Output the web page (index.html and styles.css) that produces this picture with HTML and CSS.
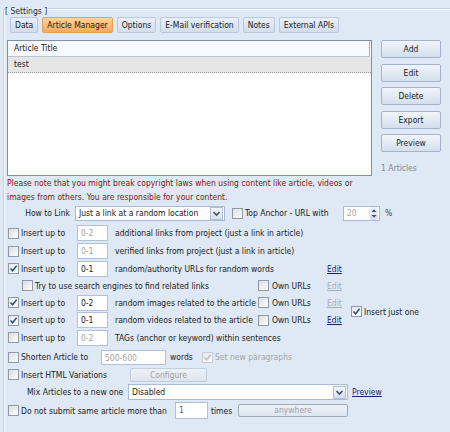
FILE: index.html
```html
<!DOCTYPE html>
<html>
<head>
<meta charset="utf-8">
<link rel="stylesheet" href="styles.css">
</head>
<body>
<fieldset class="group">
  <legend class="legend">[ Settings ]</legend>
  <div class="tabs">
    <span class="tab">Data</span>
    <span class="tab active">Article Manager</span>
    <span class="tab">Options</span>
    <span class="tab">E-Mail verification</span>
    <span class="tab">Notes</span>
    <span class="tab">External APIs</span>
  </div>
  <div class="top">
    <div class="list">
      <div class="list-head">Article Title</div>
      <div class="list-row">test</div>
    </div>
    <div class="btns">
      <span class="btn">Add</span>
      <span class="btn">Edit</span>
      <span class="btn">Delete</span>
      <span class="btn">Export</span>
      <span class="btn">Preview</span>
      <span class="count">1 Articles</span>
    </div>
  </div>
  <p class="warn">Please note that you might break copyright laws when using content like article, videos or<br>images from others. You are responsible for your content.</p>

  <div class="row how">
    <span class="how-lbl">How to Link</span>
    <span class="select sel-how"><span class="sel-text">Just a link at a random location</span><span class="arrow"><svg width="11" height="11" viewBox="0 0 11 11"><path d="M2.5 4 L5.5 7 L8.5 4" fill="none" stroke="#3d4f6e" stroke-width="1.6"/></svg></span></span>
    <span class="cbl anchor"><span class="cb"></span>Top Anchor - URL with</span>
    <span class="spin"><span class="spin-text">20</span><span class="spin-btn"><svg width="8" height="13" viewBox="0 0 8 13"><path d="M1.5 5 L4 2.2 L6.5 5 Z M1.5 8 L4 10.8 L6.5 8 Z" fill="#3d4f6e"/></svg></span></span>
    <span class="pct">%</span>
  </div>

  <div class="opts">
    <span class="cbl first"><span class="cb"></span>Insert up to</span>
    <span class="inp dis">0-2</span>
    <span class="desc wide">additional links from project (just a link in article)</span>

    <span class="cbl first"><span class="cb"></span>Insert up to</span>
    <span class="inp dis">0-1</span>
    <span class="desc wide">verified links from project (just a link in article)</span>

    <span class="cbl first"><span class="cb on"><svg width="9" height="9" viewBox="0 0 9 9"><path d="M1.5 4.5 L3.6 6.8 L7.6 1.8" fill="none" stroke="#2f4f86" stroke-width="1.5"/></svg></span>Insert up to</span>
    <span class="inp">0-1</span>
    <span class="desc mid">random/authority URLs for random words</span>
    <span class="edit"><span class="link">Edit</span></span>

    <span class="cbl try"><span class="cb"></span>Try to use search engines to find related links</span>
    <span class="own"><span class="cb"></span>Own URLs</span>
    <span class="edit"><span class="link dis">Edit</span></span>

    <span class="cbl first"><span class="cb on"><svg width="9" height="9" viewBox="0 0 9 9"><path d="M1.5 4.5 L3.6 6.8 L7.6 1.8" fill="none" stroke="#2f4f86" stroke-width="1.5"/></svg></span>Insert up to</span>
    <span class="inp">0-2</span>
    <span class="desc">random images related to the article</span>
    <span class="own"><span class="cb"></span>Own URLs</span>
    <span class="edit"><span class="link dis">Edit</span></span>
    <span class="cbl justone"><span class="cb on"><svg width="9" height="9" viewBox="0 0 9 9"><path d="M1.5 4.5 L3.6 6.8 L7.6 1.8" fill="none" stroke="#2f4f86" stroke-width="1.5"/></svg></span>Insert just one</span>

    <span class="cbl first"><span class="cb on"><svg width="9" height="9" viewBox="0 0 9 9"><path d="M1.5 4.5 L3.6 6.8 L7.6 1.8" fill="none" stroke="#2f4f86" stroke-width="1.5"/></svg></span>Insert up to</span>
    <span class="inp">0-1</span>
    <span class="desc">random videos related to the article</span>
    <span class="own"><span class="cb"></span>Own URLs</span>
    <span class="edit"><span class="link">Edit</span></span>

    <span class="cbl first"><span class="cb"></span>Insert up to</span>
    <span class="inp dis">0-2</span>
    <span class="desc wide">TAGs (anchor or keyword) within sentences</span>
  </div>

  <div class="row shorten">
    <span class="cbl sh-lbl"><span class="cb"></span>Shorten Article to</span>
    <span class="inp dis sh-inp">500-600</span>
    <span class="words">words</span>
    <span class="cbl disabled"><span class="cb on dcb"><svg width="9" height="9" viewBox="0 0 9 9"><path d="M1.5 4.5 L3.6 6.8 L7.6 1.8" fill="none" stroke="#b9bfc6" stroke-width="1.5"/></svg></span>Set new paragraphs</span>
  </div>

  <div class="row html">
    <span class="cbl html-lbl"><span class="cb"></span>Insert HTML Variations</span>
    <span class="btn dbtn cfg">Configure</span>
  </div>

  <div class="row mix">
    <span class="mix-lbl">Mix Articles to a new one</span>
    <span class="select sel-mix"><span class="sel-text">Disabled</span><span class="arrow"><svg width="11" height="11" viewBox="0 0 11 11"><path d="M2.5 4 L5.5 7 L8.5 4" fill="none" stroke="#3d4f6e" stroke-width="1.6"/></svg></span></span>
    <span class="link prev">Preview</span>
  </div>

  <div class="row donot">
    <span class="cbl dn-lbl"><span class="cb"></span>Do not submit same article more than</span>
    <span class="inp dn-inp">1</span>
    <span class="times">times</span>
    <span class="btn dbtn anyw">anywhere</span>
  </div>
</fieldset>
</body>
</html>
```

FILE: styles.css
```css
html, body {
  margin: 0;
  padding: 0;
}
body {
  width: 450px;
  height: 432px;
  overflow: hidden;
  background: #dfe9f5;
  font-family: "DejaVu Sans Condensed", "Liberation Sans", sans-serif;
  font-stretch: condensed;
  font-size: 8.5px;
  color: #1b1b1b;
}
.group {
  box-sizing: border-box;
  margin: -1px 0 0 3px;
  padding: 0;
  width: 447px;
  height: 433px;
  border: 1px solid #c3d1e2;
  border-right: none;
  border-bottom: none;
  border-radius: 3px 0 0 0;
  box-shadow: inset 1px 1px 0 #f6f9fd;
  min-width: 0;
}
.legend {
  margin-left: 1px;
  padding: 6px 0 0 0;
  line-height: 12px;
  color: #2a2a2a;
}
.tabs {
  display: flex;
  gap: 4px;
  margin-left: 6px;
}
.tab {
  height: 14px;
  line-height: 14px;
  padding: 0 4px;
  border: 1px solid #b9c8da;
  border-radius: 2px;
  background: linear-gradient(#e8eff8, #d2ddeb);
  color: #202020;
}
.tab.active {
  border-color: #e2a25c;
  background: linear-gradient(#fcd49e, #f5aa5c);
}
.top {
  display: flex;
  margin: 7px 0 0 3px;
}
.list {
  width: 363px;
  height: 134px;
  border: 1px solid #7d90aa;
  background: #fff;
}
.list-head {
  height: 15px;
  line-height: 15px;
  padding-left: 6px;
  border-right: 1px solid #9fb1c6;
  border-bottom: 1px solid #b7c4d4;
  margin-right: 1px;
  background: #f7f9fc;
}
.list-row {
  height: 15px;
  line-height: 15px;
  padding-left: 6px;
  background: #e6e6e6;
  border-bottom: 1px dotted #9a9a9a;
}
.btns {
  display: flex;
  flex-direction: column;
  gap: 5.5px;
  margin-left: 9px;
  width: 60px;
}
.btn {
  display: block;
  box-sizing: border-box;
  height: 18px;
  line-height: 16px;
  text-align: center;
  border: 1px solid #a3b4ca;
  border-radius: 2px;
  background: linear-gradient(#f1f5fa, #d3dfec);
  color: #1b1b1b;
}
.count {
  margin-top: 4px;
  line-height: 12px;
  color: #7d8791;
}
.warn {
  margin: 0;
  padding-left: 3px;
  line-height: 14px;
  color: #9a0b0b;
}
.row {
  display: flex;
  align-items: center;
  margin-left: 4px;
}
.how {
  height: 18px;
  margin-bottom: 2px;
}
.how-lbl {
  width: 62px;
  text-align: right;
  margin-right: 5px;
}
.select {
  display: flex;
  align-items: center;
  box-sizing: border-box;
  height: 15px;
  border: 1px solid #a9bcd3;
  background: #fff;
}
.sel-text {
  flex: 1;
  padding-left: 3px;
  white-space: nowrap;
  overflow: hidden;
}
.arrow {
  display: flex;
  align-items: center;
  justify-content: center;
  width: 11px;
  height: 11px;
  margin-right: 1px;
  border: 1px solid #b0c0d4;
  background: linear-gradient(#f3f6fa, #d5dfeb);
}
.sel-how {
  width: 150px;
}
.cbl {
  display: flex;
  align-items: center;
  white-space: nowrap;
}
.cb {
  box-sizing: border-box;
  width: 11px;
  height: 11px;
  margin-right: 2px;
  border: 1px solid #8e9aa8;
  background: linear-gradient(135deg, #d9dde2, #ffffff);
  display: flex;
  align-items: center;
  justify-content: center;
  flex: none;
}
.cb.on {
  background: linear-gradient(135deg, #e4e8ee, #ffffff);
}
.anchor {
  margin-left: 7px;
  width: 111px;
}
.spin {
  display: flex;
  align-items: center;
  box-sizing: border-box;
  width: 37px;
  height: 15px;
  border: 1px solid #a9bcd3;
  background: #fff;
}
.spin-text {
  flex: 1;
  padding-left: 3px;
  color: #a6a6a6;
}
.spin-btn {
  display: flex;
  width: 9px;
  height: 13px;
  margin-right: 1px;
  background: linear-gradient(#eef2f8, #d5dfeb);
  border-radius: 2px;
  justify-content: center;
}
.pct {
  margin-left: 5px;
  color: #3a3a3a;
}
.opts {
  display: grid;
  grid-template-columns: 69px 38px 143px 69px 24px auto;
  grid-template-rows: 18px 18px 17px 17px 17px 18px 17px;
  align-items: center;
  margin-left: 4px;
}
.opts .first {
  grid-column: 1;
}
.inp {
  display: block;
  box-sizing: border-box;
  width: 31px;
  height: 16px;
  line-height: 14px;
  padding-left: 3px;
  border: 1px solid #b0c2d7;
  background: #fff;
  color: #1b1b1b;
}
.inp.dis {
  color: #a3a3a3;
}
.desc {
  white-space: nowrap;
}
.desc.wide {
  grid-column: 3 / -1;
}
.desc.mid {
  grid-column: 3 / 5;
}
.opts .try {
  grid-column: 1 / 4;
  padding-left: 14px;
}
.own {
  display: flex;
  align-items: center;
  white-space: nowrap;
}
.own .cb {
  margin-right: 3px;
}
.edit {
  grid-column: 5;
}
.link {
  color: #14236b;
  text-decoration: underline;
}
.link.dis {
  color: #a8aeb6;
}
.opts .justone {
  grid-column: 6;
  grid-row: 5 / 7;
}
.shorten {
  height: 18px;
  margin-top: 2px;
}
.sh-lbl {
  width: 93px;
}
.sh-inp {
  width: 65px;
  height: 15px;
}
.words {
  width: 36px;
  padding-left: 4px;
  box-sizing: border-box;
}
.disabled {
  color: #a6a6a6;
}
.dcb {
  border-color: #c9ced4;
  background: #f3f5f7;
}
.html {
  height: 17px;
}
.html-lbl {
  width: 122px;
}
.dbtn {
  color: #a2a2a2;
  border-color: #c2cedb;
  background: linear-gradient(#eef2f7, #dde5ef);
}
.cfg {
  width: 77px;
  height: 14px;
  line-height: 12px;
}
.mix {
  height: 18px;
}
.mix-lbl {
  width: 120px;
  padding-left: 19px;
  box-sizing: border-box;
  white-space: nowrap;
}
.sel-mix {
  width: 220px;
  height: 16px;
}
.prev {
  margin-left: 4px;
}
.donot {
  height: 19px;
}
.dn-lbl {
  width: 167px;
}
.dn-inp {
  width: 33px;
  height: 17px;
  line-height: 15px;
  color: #5a5a5a;
}
.times {
  width: 30px;
  padding-left: 3px;
  box-sizing: border-box;
}
.anyw {
  width: 110px;
  height: 13px;
  line-height: 11px;
  border-color: #9eabb9;
}
```
